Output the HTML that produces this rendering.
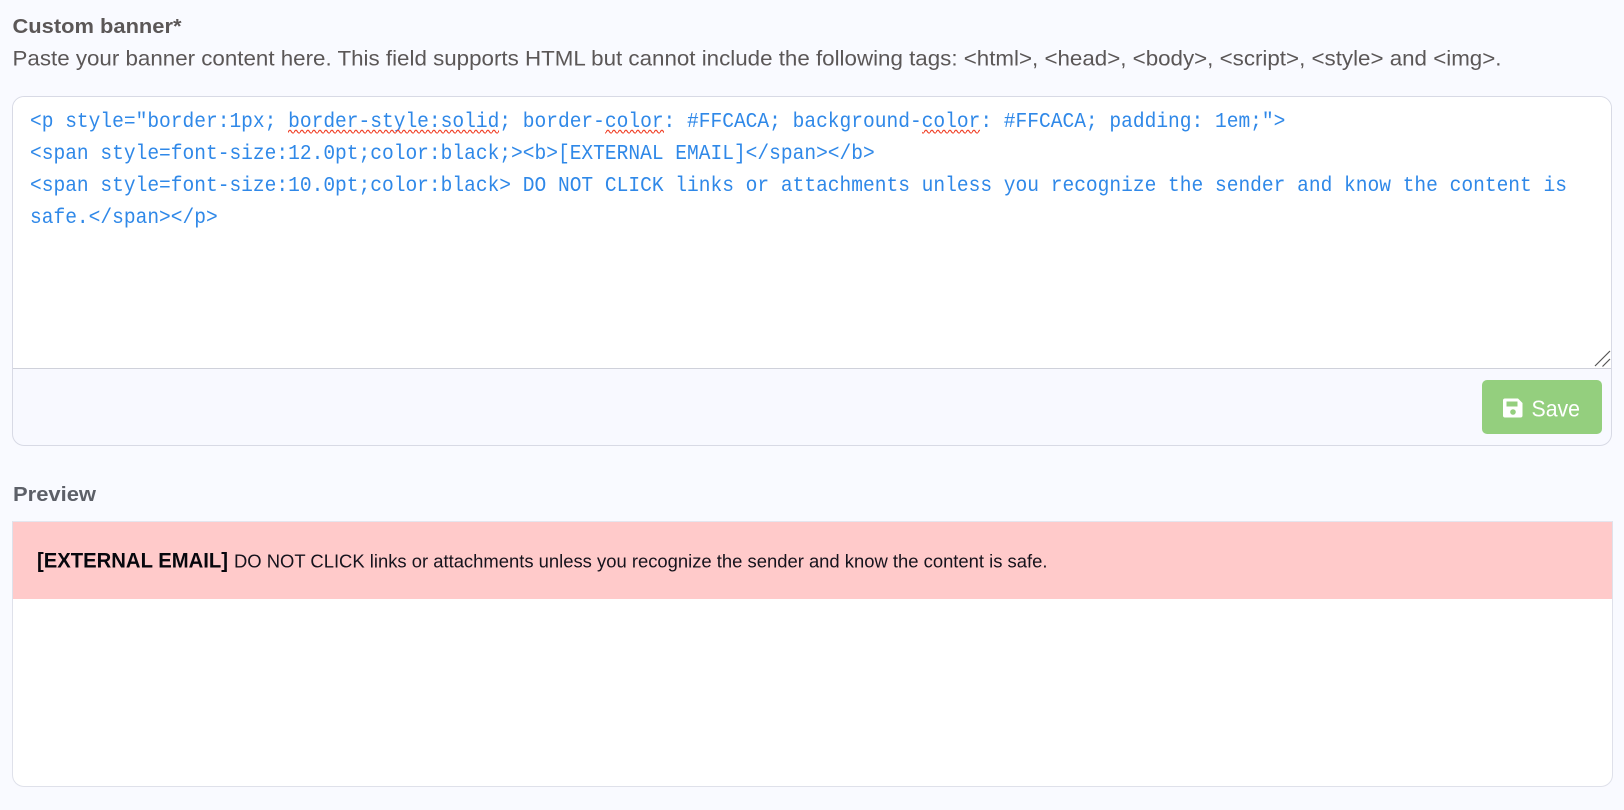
<!DOCTYPE html>
<html lang="en">
<head>
<meta charset="utf-8">
<title>Custom banner</title>
<style>
html,body{margin:0;padding:0;width:1624px;height:810px;overflow:hidden;background:#f9faff;}
body{position:relative;font-family:"Liberation Sans",sans-serif;}
.card{position:absolute;left:12px;top:96px;width:1600px;height:350px;box-sizing:border-box;border:1px solid #d8dae5;border-radius:12px;background:#f8f9ff;overflow:hidden;}
.ta{position:absolute;left:0;top:0;right:0;height:271px;background:#fff;border-bottom:1px solid #cfd1da;}
.code{position:absolute;left:30px;top:107px;width:1680px;font:21px/32px "Liberation Mono",monospace;color:#2f88e8;white-space:pre;transform:scaleX(0.931);transform-origin:0 0;}
.code .l{display:block;height:32px;}
.btn{position:absolute;left:1482px;top:380px;width:120px;height:54px;background:#94cf7e;border-radius:5px;}
.prev{position:absolute;left:12px;top:521px;width:1601px;height:266px;box-sizing:border-box;border:1px solid #dfe1ea;border-radius:0 0 12px 12px;background:#fff;overflow:hidden;border-top:1px solid #e4e6ef;}
.bar{position:absolute;left:0;top:0;right:0;height:77px;background:#ffcaca;}
svg.o{position:absolute;left:0;top:0;}
</style>
</head>
<body>
<div class="card"><div class="ta"></div></div>
<div class="code"><span class="l">&lt;p style="border:1px; border-style:solid; border-color: #FFCACA; background-color: #FFCACA; padding: 1em;"&gt;</span><span class="l">&lt;span style=font-size:12.0pt;color:black;&gt;&lt;b&gt;[EXTERNAL EMAIL]&lt;/span&gt;&lt;/b&gt;</span><span class="l">&lt;span style=font-size:10.0pt;color:black&gt; DO NOT CLICK links or attachments unless you recognize the sender and know the content is</span><span class="l">safe.&lt;/span&gt;&lt;/p&gt;</span></div>
<div class="btn"></div>
<div class="prev"><div class="bar"></div></div>
<svg class="o" width="1624" height="810" viewBox="0 0 1624 810" xmlns="http://www.w3.org/2000/svg">
  <defs>
    <pattern id="w" width="6" height="6" patternUnits="userSpaceOnUse" y="128.500">
      <path d="M0 4Q1.500 0.500 3 2.500Q4.500 5.500 6 4" fill="none" stroke="#f0432a" stroke-width="1.200"/>
    </pattern>
  </defs>
  <rect x="288" y="128.500" width="211" height="6" fill="url(#w)"/>
  <rect x="605" y="128.500" width="59" height="6" fill="url(#w)"/>
  <rect x="922" y="128.500" width="58" height="6" fill="url(#w)"/>

  <text x="12.500" y="33" font-family="'Liberation Sans',sans-serif" font-weight="700" font-size="20.500" fill="#5b5757" textLength="169" lengthAdjust="spacingAndGlyphs">Custom banner*</text>
  <text x="12.500" y="65.500" font-family="'Liberation Sans',sans-serif" font-size="21.500" fill="#5b5757" textLength="1489" lengthAdjust="spacingAndGlyphs">Paste your banner content here. This field supports HTML but cannot include the following tags: &lt;html&gt;, &lt;head&gt;, &lt;body&gt;, &lt;script&gt;, &lt;style&gt; and &lt;img&gt;.</text>
  <text x="13" y="501" font-family="'Liberation Sans',sans-serif" font-weight="700" font-size="20.500" fill="#5d6068" textLength="83" lengthAdjust="spacingAndGlyphs">Preview</text>
  <text x="37" y="567.500" font-family="'Liberation Sans',sans-serif" font-weight="700" font-size="21" fill="#07070d" textLength="191" lengthAdjust="spacingAndGlyphs">[EXTERNAL EMAIL]</text>
  <text x="234" y="567.500" font-family="'Liberation Sans',sans-serif" font-size="18" fill="#15131c" textLength="813.500" lengthAdjust="spacingAndGlyphs">DO NOT CLICK links or attachments unless you recognize the sender and know the content is safe.</text>

  <path d="M1505 398.500H1518L1522.500 403V415.500A2 2 0 0 1 1520.500 417.500H1505A2 2 0 0 1 1503 415.500V400.500A2 2 0 0 1 1505 398.500Z" fill="#fff"/>
  <rect x="1506.500" y="401.500" width="11" height="5" fill="#94cf7e"/>
  <circle cx="1513" cy="412" r="2.800" fill="#94cf7e"/>
  <text x="1531.500" y="416.500" font-family="'Liberation Sans',sans-serif" font-size="23" fill="#fff" textLength="48.500" lengthAdjust="spacingAndGlyphs">Save</text>

  <path d="M1595 366L1610 351M1602.500 366.500L1610 359" stroke="#555" stroke-width="1.200" fill="none"/>
</svg>
</body>
</html>
